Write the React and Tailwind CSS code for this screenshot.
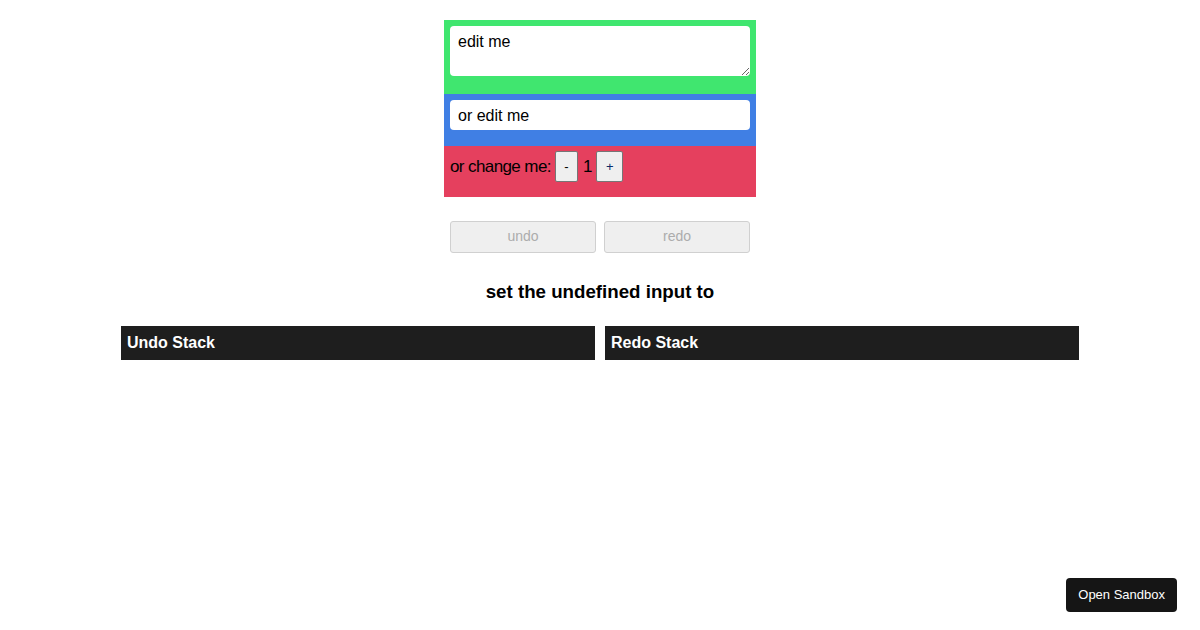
export default function App() {
  return (
    <div className="relative min-h-[630px] bg-white font-['Liberation_Sans',Arial,sans-serif] text-black">
      <div className="flex flex-col items-center pt-5">
        {/* editable fields */}
        <div className="w-[312px]">
          <div className="bg-[#40e66f] p-1.5 pb-[18px]">
            <textarea
              defaultValue="edit me"
              className="block h-[50px] w-[300px] resize-y rounded-[4px] bg-white px-2 pt-1.5 pb-1 text-base leading-5 outline-none"
            />
          </div>
          <div className="bg-[#407fe4] px-1.5 pt-1.5 pb-4">
            <input
              defaultValue="or edit me"
              className="block h-[30px] w-[300px] rounded-[4px] bg-white px-2 pt-[2px] text-base outline-none"
            />
          </div>
          <div className="flex h-[51px] items-start bg-[#e5405e] px-1.5 pt-[5px]">
            <div className="flex h-[31px] items-center">
              <span className="text-[17px] tracking-[-0.6px]">or change me:</span>
              <button className="ml-[4px] h-[31px] w-[23px] rounded-[2px] border border-[#767676] bg-[#efefef] text-[13px]">
                -
              </button>
              <span className="ml-[5px] mr-[4px] text-[17px] leading-none">1</span>
              <button className="h-[31px] w-[27px] rounded-[2px] border border-[#767676] bg-[#efefef] text-[13px] text-[#0b2a6b]">
                +
              </button>
            </div>
          </div>
        </div>

        {/* history controls */}
        <div className="mt-6 flex gap-2">
          <button
            disabled
            className="h-8 w-[146px] rounded-[3px] border border-[#d0d0d0] bg-[#efefef] pb-[2px] text-sm text-[#acacac]"
          >
            undo
          </button>
          <button
            disabled
            className="h-8 w-[146px] rounded-[3px] border border-[#d0d0d0] bg-[#efefef] pb-[2px] text-sm text-[#acacac]"
          >
            redo
          </button>
        </div>

        <h3 className="mt-[28px] text-[18.72px] font-bold leading-[22px]">set the undefined input to</h3>

        <div className="mt-[23px] flex gap-2.5">
          <div className="flex h-[34px] w-[474px] items-center bg-[#1e1e1e] px-1.5 text-base font-bold text-white">
            Undo Stack
          </div>
          <div className="flex h-[34px] w-[474px] items-center bg-[#1e1e1e] px-1.5 text-base font-bold text-white">
            Redo Stack
          </div>
        </div>
      </div>

      <button className="absolute right-[23px] bottom-[18px] h-[34px] rounded-[4px] bg-[#151515] px-3 text-[13px] text-white">
        Open Sandbox
      </button>
    </div>
  );
}
